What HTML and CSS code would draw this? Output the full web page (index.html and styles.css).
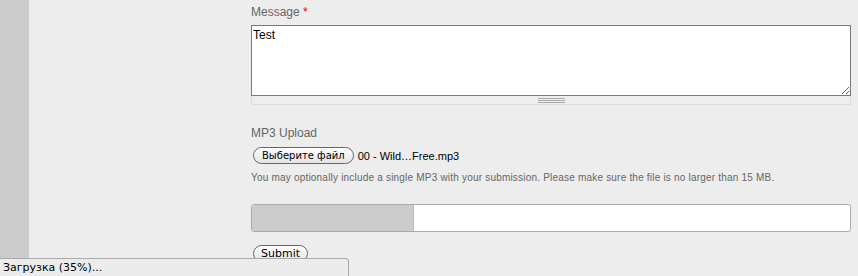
FILE: index.html
```html
<html>
  <head>
    <title>Submit a track</title>
    <link rel="stylesheet" href="styles.css">
  </head>
  <body>
    <div class="sidebar"></div>
    <div class="content">
      <div class="field">
        <label class="label" for="message">Message <span class="req">*</span></label>
        <textarea id="message" class="message">Test</textarea>
        <div class="grippie"><span class="grip"></span></div>
      </div>

      <div class="field upload">
        <div class="label">MP3 Upload</div>
        <div class="file-row">
          <button class="pill choose">Выберите файл</button>
          <span class="filename">00 - Wild…Free.mp3</span>
        </div>
        <p class="help">You may optionally include a single MP3 with your submission. Please make sure the file is no larger than 15 MB.</p>
      </div>

      <div class="progress"><div class="progress-fill"></div></div>

      <button class="pill submit">Submit</button>
    </div>

    <div class="status">Загрузка (35%)...</div>
  </body>
</html>
```

FILE: styles.css
```css
body {
    margin: 0;
    padding: 0;
    height: 276px;
    overflow: hidden;
    display: flex;
    background: #ededed;
    font-family: "Liberation Sans", Arial, sans-serif;
}

.sidebar {
    width: 29px;
    flex: none;
    background: #cccccc;
}

.content {
    padding: 5px 0 0 222px;
    width: 600px;
}

.label {
    display: block;
    font-size: 12px;
    line-height: 15px;
    color: #666;
}

.req {
    color: #e00;
}

.message {
    display: block;
    box-sizing: border-box;
    width: 600px;
    height: 71px;
    margin: 5px 0 0 0;
    padding: 2px 1px;
    border: 1px solid #7a7a7a;
    background: #fff;
    font-family: "Liberation Sans", Arial, sans-serif;
    font-size: 12px;
    color: #000;
    resize: vertical;
}

.grippie {
    height: 8px;
    width: 598px;
    border: 1px solid #ddd;
    border-top: none;
    background: #eee;
    display: flex;
    justify-content: center;
    align-items: center;
}

.grip {
    width: 27px;
    height: 5px;
    background: repeating-linear-gradient(#aaa 0 1px, transparent 1px 2px);
}

.upload {
    margin-top: 21px;
}

.file-row {
    display: flex;
    align-items: center;
    margin-top: 6px;
    padding-left: 2px;
}

.pill {
    font-family: "DejaVu Sans", sans-serif;
    font-size: 11px;
    line-height: 13px;
    height: 17px;
    padding: 0 7px;
    border: 1px solid #666;
    border-radius: 9px;
    background: linear-gradient(#ffffff, #f1f1f1 50%, #e4e4e4);
    color: #000;
}

.choose {
    font-size: 10px;
    padding: 0 8px;
}

.filename {
    font-size: 11px;
    margin-left: 4px;
    color: #000;
}

.help {
    margin: 7px 0 0 0;
    font-size: 10px;
    line-height: 13px;
    color: #666;
    letter-spacing: 0.2px;
}

.progress {
    margin-top: 20px;
    height: 26px;
    border: 1px solid #aaa;
    border-radius: 3px;
    background: #fff;
    overflow: hidden;
}

.progress-fill {
    width: 161px;
    height: 100%;
    background: #cccccc;
    border-right: 1px solid #bbb;
}

.submit {
    margin: 13px 0 0 2px;
}

.status {
    position: fixed;
    left: 0;
    bottom: 0;
    width: 345px;
    height: 17px;
    padding-left: 3px;
    border: 1px solid #aaa;
    border-left: none;
    border-bottom: none;
    border-top-right-radius: 4px;
    background: #ececec;
    font-family: "DejaVu Sans", sans-serif;
    font-size: 11px;
    line-height: 17px;
    color: #000;
}
```
